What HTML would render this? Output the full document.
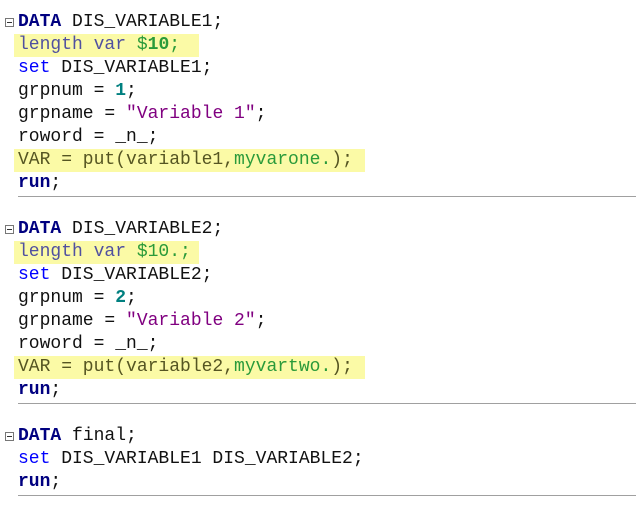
<!DOCTYPE html><html><head><style>
body{margin:0;background:#fff;width:636px;height:510px;overflow:hidden;position:relative;font-family:"Liberation Mono",monospace;font-size:18px}
.l{position:absolute;left:18px;height:23px;line-height:23px;white-space:pre;color:#111}
.h{background:#fbfaa6;left:14px;padding-left:4px}
.k{color:#000080;font-weight:bold}
.s{color:#0000ff}
.n{color:#008080;font-weight:bold}
.q{color:#800080}
.g{color:#2a9a3a}
.o{color:#555522}
.len{color:#5050a0}
.sep{position:absolute;left:18px;right:0;height:1px;background:#a0a0a0}
.f{position:absolute;left:5px;width:7px;height:7px;border:1px solid #777;background:#fff}
.f:after{content:"";position:absolute;left:1px;top:3px;width:5px;height:1px;background:#333}
</style></head><body>
<div class="f" style="top:18px"></div>
<div class="l" style="top:11px"><span class="k">DATA</span> DIS_VARIABLE1;</div>
<div class="l h" style="top:34px;width:181px"><span class="len">length var </span><span class="g">$<b>10</b>;</span></div>
<div class="l" style="top:57px"><span class="s">set</span> DIS_VARIABLE1;</div>
<div class="l" style="top:80px">grpnum = <span class="n">1</span>;</div>
<div class="l" style="top:103px">grpname = <span class="q">"Variable 1"</span>;</div>
<div class="l" style="top:126px">roword = _n_;</div>
<div class="l h" style="top:149px;width:347px"><span class="o">VAR = put(variable1,</span><span class="g">myvarone.</span><span class="o">);</span></div>
<div class="l" style="top:172px"><span class="k">run</span>;</div>
<div class="sep" style="top:196px"></div>
<div class="f" style="top:225px"></div>
<div class="l" style="top:218px"><span class="k">DATA</span> DIS_VARIABLE2;</div>
<div class="l h" style="top:241px;width:181px"><span class="len">length var </span><span class="g">$10.;</span></div>
<div class="l" style="top:264px"><span class="s">set</span> DIS_VARIABLE2;</div>
<div class="l" style="top:287px">grpnum = <span class="n">2</span>;</div>
<div class="l" style="top:310px">grpname = <span class="q">"Variable 2"</span>;</div>
<div class="l" style="top:333px">roword = _n_;</div>
<div class="l h" style="top:356px;width:347px"><span class="o">VAR = put(variable2,</span><span class="g">myvartwo.</span><span class="o">);</span></div>
<div class="l" style="top:379px"><span class="k">run</span>;</div>
<div class="sep" style="top:403px"></div>
<div class="f" style="top:432px"></div>
<div class="l" style="top:425px"><span class="k">DATA</span> final;</div>
<div class="l" style="top:448px"><span class="s">set</span> DIS_VARIABLE1 DIS_VARIABLE2;</div>
<div class="l" style="top:471px"><span class="k">run</span>;</div>
<div class="sep" style="top:495px"></div>
</body></html>
